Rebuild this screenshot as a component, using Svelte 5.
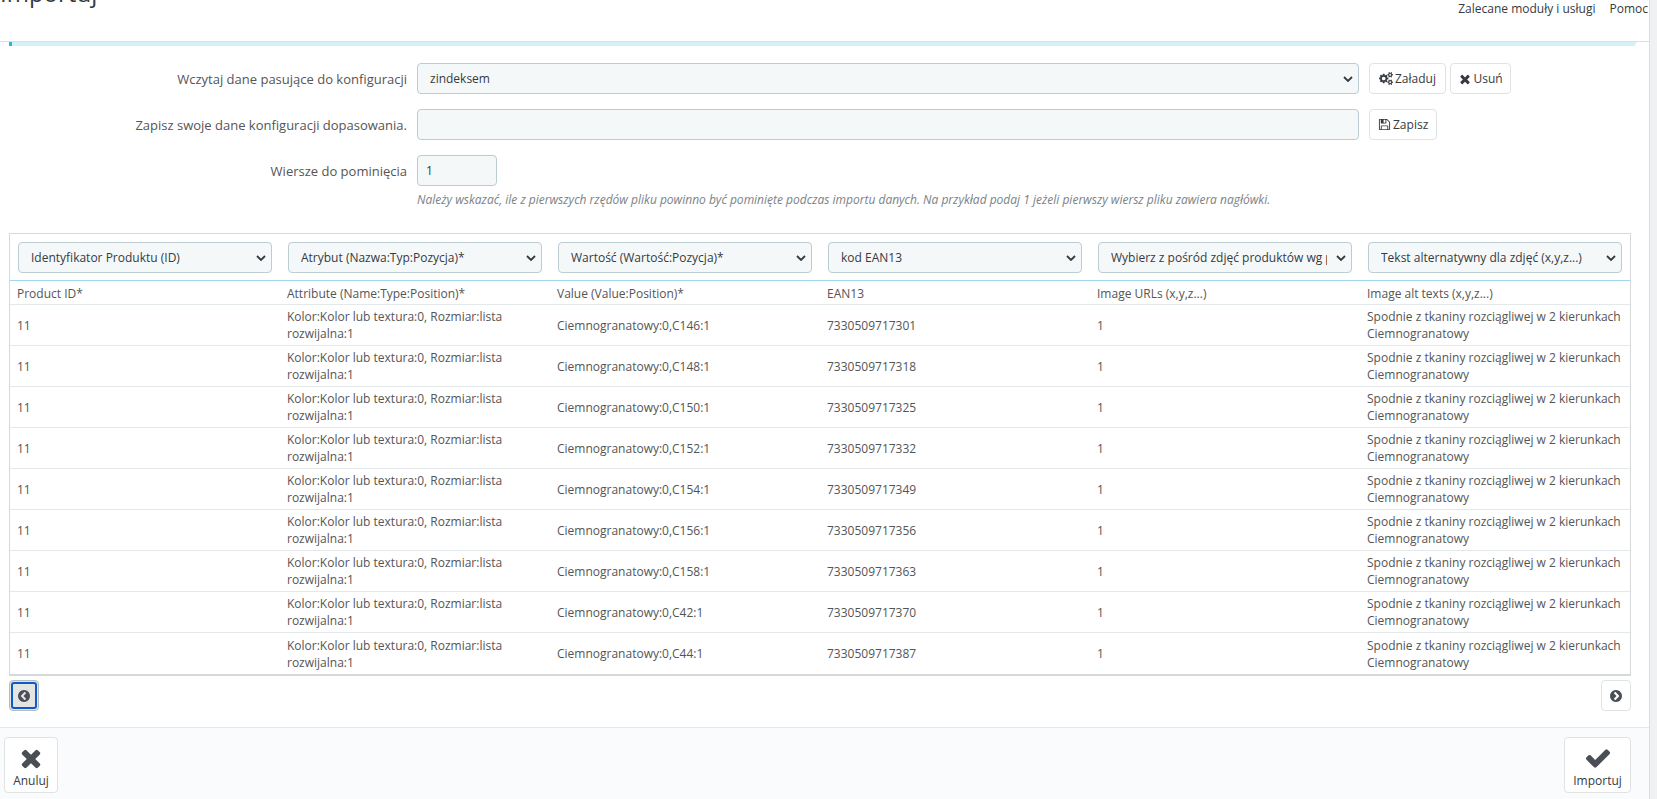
<script>
  const gear = "M896 896q0-106-75-181t-181-75-181 75-75 181 75 181 181 75 181-75 75-181zm768 512q0-52-38-90t-90-38-90 38-38 90q0 53 37.5 90.5t90.5 37.5 90.5-37.5 37.5-90.5zm0-1024q0-52-38-90t-90-38-90 38-38 90q0 53 37.5 90.5t90.5 37.5 90.5-37.5 37.5-90.5zm-384 421v185q0 10-7 19.5t-16 10.5l-155 24q-11 35-32 76 34 48 90 115 7 11 7 20 0 12-7 19-23 30-82.5 89.5t-78.5 59.5q-11 0-21-7l-115-90q-37 19-77 31-11 108-23 155-7 24-30 24h-186q-11 0-20-7.5t-10-17.5l-23-153q-34-10-75-31l-118 89q-7 7-20 7-11 0-21-8-144-133-144-160 0-9 7-19 10-14 41-53t47-61q-23-44-35-82l-152-24q-10-1-17-9.5t-7-19.5v-185q0-10 7-19.5t16-10.5l155-24q11-35 32-76-34-48-90-115-7-11-7-20 0-12 7-20 22-30 82-89t79-59q11 0 21 7l115 90q34-18 77-32 11-108 23-154 7-24 30-24h186q11 0 20 7.5t10 17.5l23 153q34 10 75 31l118-89q8-7 20-7 11 0 21 8 144 133 144 160 0 8-7 19-12 16-42 54t-45 60q23 48 34 82l152 23q10 2 17 10.5t7 19.5zm640 533v140q0 16-149 31-12 27-30 52 51 113 51 138 0 4-4 7-122 71-124 71-8 0-46-47t-52-68q-20 2-30 2t-30-2q-14 21-52 68t-46 47q-2 0-124-71-4-3-4-7 0-25 51-138-18-25-30-52-149-15-149-31v-140q0-16 149-31 13-29 30-52-51-113-51-138 0-4 4-7 4-2 35-20t59-34 30-16q8 0 46 46.5t52 67.5q20-2 30-2t30 2q51-71 92-112l6-2q4 0 124 70 4 3 4 7 0 25-51 138 17 23 30 52 149 15 149 31zm0-1024v140q0 16-149 31-12 27-30 52 51 113 51 138 0 4-4 7-122 71-124 71-8 0-46-47t-52-68q-20 2-30 2t-30-2q-14 21-52 68t-46 47q-2 0-124-71-4-3-4-7 0-25 51-138-18-25-30-52-149-15-149-31v-140q0-16 149-31 13-29 30-52-51-113-51-138 0-4 4-7 4-2 35-20t59-34 30-16q8 0 46 46.5t52 67.5q20-2 30-2t30 2q51-71 92-112l6-2q4 0 124 70 4 3 4 7 0 25-51 138 17 23 30 52 149 15 149 31z";
  const times = "M1490 1322q0 40-28 68l-136 136q-28 28-68 28t-68-28l-294-294-294 294q-28 28-68 28t-68-28l-136-136q-28-28-28-68t28-68l294-294-294-294q-28-28-28-68t28-68l136-136q28-28 68-28t68 28l294 294 294-294q28-28 68-28t68 28l136 136q28 28 28 68t-28 68l-294 294 294 294q28 28 28 68z";
  const check = "M1671 566q0 40-28 68l-724 724-136 136q-28 28-68 28t-68-28l-136-136-362-362q-28-28-28-68t28-68l136-136q28-28 68-28t68 28l294 295 656-657q28-28 68-28t68 28l136 136q28 28 28 68z";
  const left = "M1037 1395l102-102q19-19 19-45t-19-45l-307-307 307-307q19-19 19-45t-19-45l-102-102q-19-19-45-19t-45 19l-454 454q-19 19-19 45t19 45l454 454q19 19 45 19t45-19zm627-499q0 209-103 385.5t-279.5 279.5-385.5 103-385.5-103-279.5-279.5-103-385.5 103-385.5 279.5-279.5 385.5-103 385.5 103 279.5 279.5 103 385.5z";
  const right = "M845 1395l454-454q19-19 19-45t-19-45l-454-454q-19-19-45-19t-45 19l-102 102q-19 19-19 45t19 45l307 307-307 307q-19 19-19 45t19 45l102 102q19 19 45 19t45-19zm819-499q0 209-103 385.5t-279.5 279.5-385.5 103-385.5-103-279.5-279.5-103-385.5 103-385.5 279.5-279.5 385.5-103 385.5 103 279.5 279.5 103 385.5z";
  const floppy = "M512 1536h768v-384h-768v384zm896 0h128v-896q0-14-10-38.5t-20-34.5l-281-281q-10-10-34-20t-39-10v416q0 40-28 68t-68 28h-576q-40 0-68-28t-28-68v-416h-128v1280h128v-416q0-40 28-68t68-28h832q40 0 68 28t28 68v416zm-384-928v-320q0-13-9.5-22.5t-22.5-9.5h-192q-13 0-22.5 9.5t-9.5 22.5v320q0 13 9.5 22.5t22.5 9.5h192q13 0 22.5-9.5t9.5-22.5zm640 32v928q0 40-28 68t-68 28h-1344q-40 0-68-28t-28-68v-1344q0-40 28-68t68-28h928q40 0 88 20t76 48l280 280q28 28 48 76t20 88z";

  const selects = [
    "Identyfikator Produktu (ID)",
    "Atrybut (Nazwa:Typ:Pozycja)*",
    "Wartość (Wartość:Pozycja)*",
    "kod EAN13",
    "Wybierz z pośród zdjęć produktów wg pozycji (x,y,z...)",
    "Tekst alternatywny dla zdjęć (x,y,z...)"
  ];
  const heads = ["Product ID*", "Attribute (Name:Type:Position)*", "Value (Value:Position)*", "EAN13", "Image URLs (x,y,z...)", "Image alt texts (x,y,z...)"];
  const rows = [
    ["C146", "7330509717301"],
    ["C148", "7330509717318"],
    ["C150", "7330509717325"],
    ["C152", "7330509717332"],
    ["C154", "7330509717349"],
    ["C156", "7330509717356"],
    ["C158", "7330509717363"],
    ["C42", "7330509717370"],
    ["C44", "7330509717387"]
  ];
</script>

<div class="page">
  <main class="main">
    <header class="header">
      <h1 class="title">Importuj</h1>
      <nav class="toolbar">
        <a href="#a">Zalecane moduły i usługi</a>
        <a href="#b">Pomoc</a>
      </nav>
    </header>
    <div class="stripe"></div>

    <form class="form">
      <div class="row">
        <label class="label" for="cfg">Wczytaj dane pasujące do konfiguracji</label>
        <select id="cfg" class="ctl wide"><option>zindeksem</option></select>
        <button type="button" class="btn load"><svg class="ico gears" viewBox="0 0 1920 1792"><path d={gear}/></svg>Załaduj</button>
        <button type="button" class="btn del"><svg class="ico" viewBox="0 0 1792 1792"><path d={times}/></svg>Usuń</button>
      </div>
      <div class="row">
        <label class="label" for="save">Zapisz swoje dane konfiguracji dopasowania.</label>
        <input id="save" class="ctl wide" />
        <button type="button" class="btn"><svg class="ico" viewBox="0 0 1792 1792"><path d={floppy}/></svg>Zapisz</button>
      </div>
      <div class="row last">
        <label class="label" for="skip">Wiersze do pominięcia</label>
        <input id="skip" class="ctl small" value="1" />
      </div>
      <p class="help">Należy wskazać, ile z pierwszych rzędów pliku powinno być pominięte podczas importu danych. Na przykład podaj 1 jeżeli pierwszy wiersz pliku zawiera nagłówki.</p>
    </form>

    <div class="tablebox">
      <table>
        <thead>
          <tr class="selrow">
            {#each selects as s}
              <th><select class="ctl colsel"><option>{s}</option></select></th>
            {/each}
          </tr>
          <tr class="headrow">
            {#each heads as h}<th>{h}</th>{/each}
          </tr>
        </thead>
        <tbody>
          {#each rows as r}
            <tr>
              <td>11</td>
              <td>Kolor:Kolor lub textura:0, Rozmiar:lista rozwijalna:1</td>
              <td>Ciemnogranatowy:0,{r[0]}:1</td>
              <td>{r[1]}</td>
              <td>1</td>
              <td>Spodnie z tkaniny rozciągliwej w 2 kierunkach Ciemnogranatowy</td>
            </tr>
          {/each}
        </tbody>
      </table>
    </div>

    <div class="pager">
      <button type="button" class="btn page-btn focused" aria-label="Poprzednia"><svg class="arrow" viewBox="0 0 1792 1792"><path d={left}/></svg></button>
      <button type="button" class="btn page-btn" aria-label="Następna"><svg class="arrow" viewBox="0 0 1792 1792"><path d={right}/></svg></button>
    </div>

    <footer class="footer">
      <button type="button" class="btn big cancel"><svg viewBox="0 0 1792 1792"><path d={times}/></svg>Anuluj</button>
      <button type="button" class="btn big submit"><svg viewBox="0 0 1792 1792"><path d={check}/></svg>Importuj</button>
    </footer>
  </main>
</div>

<style>
  :global(html), :global(body) { margin: 0; height: 799px; overflow: hidden; background: #eff1f2; }
  .page { font-family: "Open Sans", "Noto Sans", sans-serif; font-size: 12px; color: #363a41; height: 799px; }
  .main { width: 1649px; height: 799px; background: #fff; border-right: 1px solid #d9dee0; display: flex; flex-direction: column; }

  .header { height: 41px; flex: none; display: flex; justify-content: space-between; align-items: flex-start; padding-left: 0; padding-right: 1px; border-bottom: 1px solid #dcdfe0; overflow: hidden; }
  .title { margin: -24px 0 0; font-size: 24px; font-weight: 400; line-height: 33px; color: #363a41; }
  .toolbar { display: flex; gap: 14px; line-height: 17px; }
  .toolbar a { color: #363a41; text-decoration: none; font-size: 12px; }

  .stripe { height: 4px; margin: 0 13px 0 9px; flex: none; background: #d4f2f6; border-left: 3px solid #25b9d7; border-radius: 0 0 3px 0; }

  .form { padding-top: 17px; flex: none; }
  .row { display: flex; align-items: center; height: 31px; margin-bottom: 15px; }
  .row.last { margin-bottom: 0; }
  .label { width: 407px; flex: none; text-align: right; font-size: 13px; color: #555; margin-right: 10px; }
  .ctl { box-sizing: border-box; background-color: #f5f8f9; border: 1px solid #bbcdd2; border-radius: 4px; font: inherit; color: #363a41; outline: none; appearance: none; -webkit-appearance: none; }
  select.ctl { background-image: url("data:image/svg+xml,%3Csvg xmlns='http://www.w3.org/2000/svg' width='10' height='6' viewBox='0 0 10 6'%3E%3Cpath d='M1 1l4 4 4-4' fill='none' stroke='%23363a41' stroke-width='1.8'/%3E%3C/svg%3E"); background-repeat: no-repeat; background-position: right 5px center; }
  .wide { width: 942px; height: 31px; padding: 0 12px; margin-right: 10px; font-size: 12px; }
  .small { width: 80px; height: 31px; padding: 0 8px; }
  .btn { box-sizing: border-box; background: #fff; border: 1px solid #dfe3e4; border-radius: 4px; font: inherit; color: #363a41; height: 31px; padding: 0 8px; display: inline-flex; align-items: center; justify-content: center; cursor: pointer; }
  .load { padding: 0 9px; }
  .del { margin-left: 4px; padding: 0 7.5px; }
  .del .ico { width: 14px; height: 14px; margin-right: 1px; }
  .ico { width: 13px; height: 13px; fill: #363a41; margin-right: 2px; }
  .gears { width: 14px; }

  .help { margin: 6px 0 0 417px; font-size: 12px; font-style: italic; color: #7b8285; line-height: 16px; }

  .tablebox { margin: 25px 0 0 9px; width: 1622px; box-sizing: border-box; border: 1px solid #d5d9da; border-bottom-width: 2px; flex: none; }
  table { border-collapse: separate; border-spacing: 0; table-layout: fixed; width: 1620px; }
  th, td { width: 270px; font-weight: 400; text-align: left; font-size: 12px; line-height: 17px; color: #555; padding: 3px 8px 3px 7px; box-sizing: border-box; }
  .selrow th { padding: 8px 9px 7px 7.5px; height: 47px; border-bottom: 1px solid #9fd8e8; }
  .colsel { width: 254px; height: 31px; padding: 0 24px 0 12.5px; display: block; }
  .headrow th { height: 24px; padding-top: 3px; padding-bottom: 2px; border-bottom: 1px solid #e3e9eb; }
  td { height: 41px; border-bottom: 1px solid #e3e9eb; }
  tbody tr:last-child td { border-bottom: 0; }

  .pager { display: flex; justify-content: space-between; margin: 4px 0 0 9px; width: 1622px; flex: none; }
  .page-btn { width: 30px; padding: 0; }
  .arrow { width: 14px; height: 14px; fill: #4a4f55; }
  .focused { background: #e4e4e4; border-color: #b8bcbe; position: relative; }
  .focused::after { content: ""; position: absolute; inset: 1px; border: 2px solid #0b5cc4; border-radius: 3px; }

  .footer { margin-top: 16px; flex: 1; background: #fafbfc; border-top: 1px solid #e5e8e9; display: flex; justify-content: space-between; padding: 9px 18px 0 4px; }
  .big { height: 56px; flex-direction: column; justify-content: flex-start; padding: 0; font-size: 12px; }
  .big svg { width: 28px; height: 28px; fill: #4a4f55; margin-top: 6px; }
  .cancel { width: 54px; }
  .submit { width: 67px; }
</style>
